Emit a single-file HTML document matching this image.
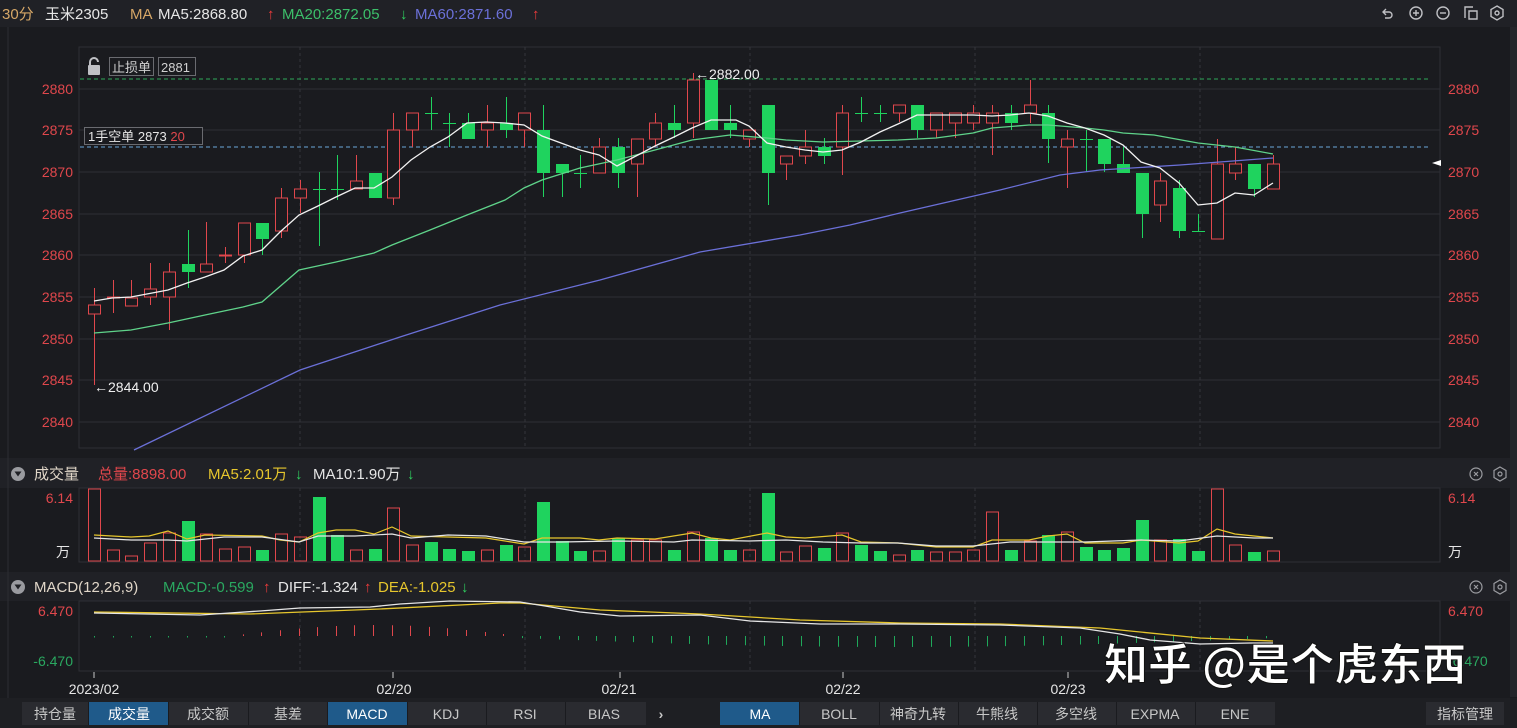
<!DOCTYPE html>
<html><head><meta charset="utf-8">
<style>
html,body{margin:0;padding:0;background:#1a1b1f;width:1517px;height:728px;overflow:hidden;font-family:"Liberation Sans","Noto Sans CJK SC",sans-serif;}
svg{display:block}
</style></head><body>
<svg id="s" width="1517" height="728" xmlns="http://www.w3.org/2000/svg" font-family="Liberation Sans, Noto Sans CJK SC, sans-serif">
<rect width="1517" height="728" fill="#1a1b1f"/>
<rect x="0" y="0" width="1517" height="27" fill="#202126"/>
<rect x="0" y="458" width="1517" height="30" fill="#202126"/>
<rect x="0" y="572" width="1517" height="29" fill="#202126"/>
<rect x="0" y="698" width="1517" height="30" fill="#1e1f23"/>
<rect x="1510" y="27" width="7" height="670" fill="#24252a"/>
<line x1="8" y1="27" x2="8" y2="698" stroke="#2c2d33"/>
<!-- header -->
<g font-size="15">
<text x="2" y="19" fill="#d6a767">30分</text>
<text x="45" y="19" fill="#e6e6e6">玉米2305</text>
<text x="130" y="19" fill="#d6a767">MA</text>
<text x="158" y="19" fill="#e6e6e6">MA5:2868.80</text>
<text x="267" y="19" fill="#f03b3b">↑</text>
<text x="282" y="19" fill="#3cbf6a">MA20:2872.05</text>
<text x="400" y="19" fill="#2fcf5e">↓</text>
<text x="415" y="19" fill="#6b70d8">MA60:2871.60</text>
<text x="532" y="19" fill="#f03b3b">↑</text>
</g>
<g stroke="#bfc0c4" fill="none" stroke-width="1.4">
<path d="M1386 9 l-3 3 l3 3 M1383 12 h6 a3 3 0 0 1 0 6 h-4"/>
<circle cx="1416" cy="13" r="6"/><path d="M1413 13h6M1416 10v6"/>
<circle cx="1443" cy="13" r="6"/><path d="M1440 13h6"/>
<path d="M1465 18v-11h8M1469 11h8v8h-8z"/>
<path d="M1497 6l6 3.5v7l-6 3.5l-6-3.5v-7z"/><circle cx="1497" cy="13" r="2"/>
</g>
<!-- main frame -->
<g stroke="#2e2f35" fill="none">
<path d="M79 47H1440V448H79z"/>
<path d="M79 89H1440M79 130H1440M79 172H1440M79 214H1440M79 255H1440M79 297H1440M79 339H1440M79 380H1440M79 422H1440"/>
</g>
<g stroke="#34353b" stroke-dasharray="3,3"><path d="M300 47V448M525 47V448M750 47V448M975 47V448M1200 47V448"/></g>
<g font-size="14" fill="#e0474c">
<g text-anchor="end"><text x="73" y="94">2880</text><text x="73" y="135">2875</text><text x="73" y="177">2870</text><text x="73" y="219">2865</text><text x="73" y="260">2860</text><text x="73" y="302">2855</text><text x="73" y="344">2850</text><text x="73" y="385">2845</text><text x="73" y="427">2840</text></g>
<text x="1448" y="94">2880</text><text x="1448" y="135">2875</text><text x="1448" y="177">2870</text><text x="1448" y="219">2865</text><text x="1448" y="260">2860</text><text x="1448" y="302">2855</text><text x="1448" y="344">2850</text><text x="1448" y="385">2845</text><text x="1448" y="427">2840</text>
</g>
<path d="M1432 163l9-3v6z" fill="#fff"/>
<line x1="80" y1="79" x2="1430" y2="79" stroke="#2fa85a" stroke-dasharray="4,3"/>
<line x1="80" y1="147" x2="1430" y2="147" stroke="#6aa7d8" stroke-dasharray="4,3"/>
<g>
<rect x="88" y="65" width="12" height="10" rx="1" fill="#bfc0c4"/><path d="M90 65v-3a4 4 0 0 1 8 0" stroke="#bfc0c4" stroke-width="2" fill="none"/>
<rect x="109.5" y="57.5" width="44" height="18" fill="none" stroke="#6a6b70"/>
<text x="112" y="72" font-size="13" fill="#d0d0d0">止损单</text>
<rect x="158.5" y="57.5" width="37" height="18" fill="none" stroke="#6a6b70"/>
<text x="161" y="72" font-size="13" fill="#d0d0d0">2881</text>
<rect x="84.5" y="127.5" width="118" height="17" fill="#1a1b1f" stroke="#6a6b70"/>
<text x="88" y="141" font-size="13" fill="#e6e6e6">1手空单  2873  <tspan fill="#e0474c">20</tspan></text>
</g>
<g id="candles"></g>
<g fill="none" stroke-width="1.3">
<polyline stroke="#6b70d8" points="134,450 300,370 400,337 500,305 600,280 700,252 800,235 850,225 900,213 1000,190 1060,175 1100,170 1180,165 1273,158"/>
<polyline stroke="#5fd38a" points="94,333 131,330 168,323 205,315 243,307 262,302 299,270 336,262 374,253 392,245 430,230 467,215 505,200 524,188 542,180 580,168 617,160 655,150 692,140 730,135 767,138 786,140 823,142 861,141 898,140 936,138 973,133 992,128 1029,125 1048,125 1085,128 1104,130 1123,133 1154,135 1198,143 1235,147 1273,154"/>
<polyline stroke="#f2f2f2" points="94,301 112,298 131,297 168,290 187,283 205,277 224,270 243,256 262,250 280,232 299,215 318,206 336,197 355,188 374,188 392,177 411,160 430,147 448,137 467,123 486,122 505,123 524,125 542,136 561,143 580,150 599,155 617,166 636,156 655,146 674,137 692,128 711,120 736,120 749,126 767,143 786,147 805,150 823,152 842,150 861,142 880,132 898,124 917,115 936,115 973,115 992,116 1010,115 1029,113 1048,116 1067,123 1085,128 1104,135 1123,145 1141,162 1160,168 1179,183 1198,205 1217,203 1235,193 1254,195 1273,183"/>
</g>
<text x="94" y="392" font-size="14" fill="#f0f0f0">←2844.00</text>
<text x="695" y="79" font-size="14" fill="#f0f0f0">←2882.00</text>
<!-- volume panel -->
<circle cx="18" cy="474" r="7" fill="#9a9ba0"/><path d="M14.5 471.5h7l-3.5 5z" fill="#202126"/>
<g font-size="15">
<text x="34" y="479" fill="#e0d6c8">成交量</text>
<text x="98" y="479" fill="#e0474c">总量:8898.00</text>
<text x="208" y="479" fill="#e6c62d">MA5:2.01万</text><text x="295" y="479" fill="#2fcf5e">↓</text>
<text x="313" y="479" fill="#e6e6e6">MA10:1.90万</text><text x="407" y="479" fill="#2fcf5e">↓</text>
</g>
<g stroke="#9a9ba0" fill="none" stroke-width="1.2"><circle cx="1476" cy="474" r="6"/><path d="M1474 472l4 4M1478 472l-4 4"/><path d="M1500 467l6 3.5v7l-6 3.5l-6-3.5v-7z"/><circle cx="1500" cy="474" r="2"/></g>
<g stroke="#2e2f35" fill="none"><path d="M79 488H1440V562H79z"/></g>
<g stroke="#34353b" stroke-dasharray="3,3"><path d="M300 488V562M525 488V562M750 488V562M975 488V562M1200 488V562"/></g>
<text x="73" y="503" font-size="14" fill="#e0474c" text-anchor="end">6.14</text>
<text x="56" y="557" font-size="14" fill="#e6e6e6">万</text>
<text x="1448" y="503" font-size="14" fill="#e0474c">6.14</text>
<text x="1448" y="557" font-size="14" fill="#e6e6e6">万</text>
<g id="vol"></g>
<g fill="none" stroke-width="1.2">
<polyline stroke="#e6c62d" points="94,535 131,537 149,536 168,531 187,539 205,535 262,536 280,540 299,542 318,533 336,530 355,530 374,534 392,527 411,536 448,537 486,538 524,544 542,538 580,538 599,540 617,538 655,539 692,533 711,538 730,540 767,533 786,537 805,538 842,535 861,542 898,543 936,547 973,547 992,540 1029,540 1048,536 1067,534 1085,543 1104,543 1123,543 1141,540 1179,543 1198,541 1217,529 1235,534 1273,538"/>
<polyline stroke="#e6e6e6" points="94,538 131,540 168,540 187,541 224,537 262,537 299,542 318,536 355,536 392,534 411,538 448,535 486,536 524,542 561,542 617,541 674,542 692,540 749,541 786,540 823,542 861,543 898,543 936,546 973,546 1010,542 1048,542 1085,542 1141,540 1179,541 1217,536 1254,538 1273,538"/>
</g>
<!-- macd panel -->
<circle cx="18" cy="587" r="7" fill="#9a9ba0"/><path d="M14.5 584.5h7l-3.5 5z" fill="#202126"/>
<g font-size="15">
<text x="34" y="592" fill="#e0d6c8">MACD(12,26,9)</text>
<text x="163" y="592" fill="#2aa860">MACD:-0.599</text><text x="263" y="592" fill="#f03b3b">↑</text>
<text x="278" y="592" fill="#e6e6e6">DIFF:-1.324</text><text x="364" y="592" fill="#f03b3b">↑</text>
<text x="378" y="592" fill="#e6c62d">DEA:-1.025</text><text x="461" y="592" fill="#2fcf5e">↓</text>
</g>
<g stroke="#9a9ba0" fill="none" stroke-width="1.2"><circle cx="1476" cy="587" r="6"/><path d="M1474 585l4 4M1478 585l-4 4"/><path d="M1500 580l6 3.5v7l-6 3.5l-6-3.5v-7z"/><circle cx="1500" cy="587" r="2"/></g>
<g stroke="#2e2f35" fill="none"><path d="M79 601H1440V671H79z"/></g>
<g stroke="#34353b" stroke-dasharray="3,3"><path d="M300 601V671M525 601V671M750 601V671M975 601V671M1200 601V671"/></g>
<text x="73" y="616" font-size="14" fill="#e0474c" text-anchor="end">6.470</text>
<text x="73" y="666" font-size="14" fill="#2aa860" text-anchor="end">-6.470</text>
<text x="1448" y="616" font-size="14" fill="#e0474c">6.470</text>
<text x="1448" y="666" font-size="14" fill="#2aa860">-6.470</text>
<g id="hist"></g>
<g fill="none" stroke-width="1.3">
<polyline stroke="#e6c62d" points="94,612 250,614 380,609 500,603 520,603 600,610 700,614 800,620 900,623 1000,624 1100,628 1200,638 1273,641"/>
<polyline stroke="#e6e6e6" points="94,613 200,615 260,611 300,608 370,607 400,604 450,601 520,602 545,606 580,612 620,616 700,615 750,621 820,624 900,624 1000,625 1080,628 1120,634 1150,640 1200,644 1250,643 1273,643"/>
</g>
<!-- date axis -->
<g stroke="#c8c8c8"><path d="M94 672v6M393 672v6M620 672v6M843 672v6M1068 672v6"/></g>
<g font-size="14" fill="#e6e6e6" text-anchor="middle">
<text x="94" y="694">2023/02</text><text x="394" y="694">02/20</text><text x="619" y="694">02/21</text><text x="843" y="694">02/22</text><text x="1068" y="694">02/23</text>
</g>
<text x="1104" y="680" font-size="44" font-weight="bold" fill="#ffffff" stroke="#111" stroke-width="1" font-family="Noto Sans CJK SC, sans-serif">知乎 @是个虎东西</text>
<!-- tabs -->
<g font-size="14" text-anchor="middle">
<rect x="22" y="702" width="624" height="23" fill="#2a2b30"/>
<rect x="89" y="702" width="79" height="23" fill="#1f5a8a"/>
<rect x="327" y="702" width="80" height="23" fill="#1f5a8a"/>
<g stroke="#1a1b1f"><path d="M88.5 702v23M168.5 702v23M248.5 702v23M327.5 702v23M407.5 702v23M486.5 702v23M565.5 702v23"/></g>
<g fill="#c8c8c8"><text x="55" y="719">持仓量</text><text x="208" y="719">成交额</text><text x="288" y="719">基差</text><text x="446" y="719">KDJ</text><text x="525" y="719">RSI</text><text x="604" y="719">BIAS</text></g>
<g fill="#ffffff"><text x="129" y="719">成交量</text><text x="367" y="719">MACD</text></g>
<text x="661" y="719" fill="#c8c8c8" font-weight="bold">›</text>
<rect x="720" y="702" width="555" height="23" fill="#2a2b30"/>
<rect x="720" y="702" width="79" height="23" fill="#1f5a8a"/>
<g stroke="#1a1b1f"><path d="M799.5 702v23M879.5 702v23M958.5 702v23M1037.5 702v23M1116.5 702v23M1195.5 702v23"/></g>
<text x="760" y="719" fill="#fff">MA</text>
<g fill="#c8c8c8"><text x="839" y="719">BOLL</text><text x="918" y="719">神奇九转</text><text x="997" y="719">牛熊线</text><text x="1076" y="719">多空线</text><text x="1155" y="719">EXPMA</text><text x="1235" y="719">ENE</text></g>
<rect x="1426" y="702" width="78" height="23" fill="#2a2b30"/>
<text x="1465" y="719" fill="#c8c8c8">指标管理</text>
</g>
</svg>
<script>
var C=[["r",305,314,288,385],["r",297,298,280,313],["r",298,306,280,306],["r",289,297,263,305],["r",272,297,263,330],["g",264,272,230,288],["r",264,272,222,272],["r",255,256,247,263],["r",223,255,223,263],["g",223,239,223,255],["r",198,231,188,238],["r",189,198,180,213],["g",189,190,172,246],["g",189,190,155,200],["r",181,189,155,189],["g",173,198,173,198],["r",130,198,113,205],["r",113,130,113,147],["g",113,114,97,130],["g",123,124,113,147],["g",123,139,113,139],["r",123,130,105,147],["g",123,130,97,138],["r",113,130,113,147],["g",130,173,105,197],["g",164,173,164,197],["g",173,174,155,188],["r",147,173,138,173],["g",147,173,138,188],["r",139,164,139,197],["r",123,139,113,147],["g",123,130,105,138],["r",80,123,73,138],["g",80,130,80,130],["g",123,130,105,138],["r",130,139,130,147],["g",105,173,105,205],["r",156,164,156,180],["r",147,156,130,164],["g",147,156,138,164],["r",113,147,105,175],["g",113,114,97,122],["g",113,114,105,122],["r",105,113,105,122],["g",105,130,105,138],["r",113,130,113,138],["r",113,123,113,138],["r",113,123,105,130],["r",113,123,105,155],["g",113,123,105,130],["r",105,113,80,123],["g",113,139,105,163],["r",139,147,130,188],["g",139,140,130,172],["g",139,164,139,172],["g",164,173,147,173],["g",173,214,173,238],["r",181,205,173,222],["g",188,231,180,238],["g",231,232,214,231],["r",164,239,139,239],["r",164,173,147,180],["g",164,189,164,197],["r",164,189,155,189]];
var V=[489,550,556,543,533,521,534,549,547,550,534,537,497,535,550,549,508,545,542,549,551,550,545,547,502,541,551,551,538,540,540,550,532,538,550,550,493,552,546,548,533,545,551,555,550,552,552,550,512,550,541,535,532,547,550,548,520,540,539,551,489,545,552,551];
var R="#e0474c",G="#1fd35e",ns="http://www.w3.org/2000/svg";
function el(p,t,a){var e=document.createElementNS(ns,t);for(var k in a)e.setAttribute(k,a[k]);p.appendChild(e);return e;}
var cg=document.getElementById("candles"),vg=document.getElementById("vol"),hg=document.getElementById("hist");
for(var i=0;i<64;i++){var x=Math.round(94+i*18.71)+0.5,c=C[i],col=c[0]=="r"?R:G;
el(cg,"line",{x1:x,y1:c[3],x2:x,y2:c[1],stroke:col});el(cg,"line",{x1:x,y1:c[2],x2:x,y2:c[4],stroke:col});
var h=Math.max(1,c[2]-c[1]);
if(c[0]=="r")el(cg,"rect",{x:x-6,y:c[1],width:12,height:h,fill:"#1a1b1f",stroke:R});else el(cg,"rect",{x:x-6.5,y:c[1],width:13,height:h,fill:G});
var vy=V[i];var vc=C[i][0]=="r";
if(vc)el(vg,"rect",{x:x-6,y:vy,width:12,height:561-vy,fill:"none",stroke:R});else el(vg,"rect",{x:x-6.5,y:vy,width:13,height:561-vy,fill:G});
}
for(var j=0;j<128;j++){var x=Math.round(94+j*9.3)+0.5,v;
if(x<230)v=-1.5;else if(x<520){v=Math.sin((x-230)/290*Math.PI)*11;}else{v=-(Math.sin((x-520)/753*Math.PI)*9+2);}
if(j%2)continue;
el(hg,"line",{x1:x,y1:636,x2:x,y2:636-v,stroke:v>0?R:"#1fa85a"});}
</script>
</body></html>
